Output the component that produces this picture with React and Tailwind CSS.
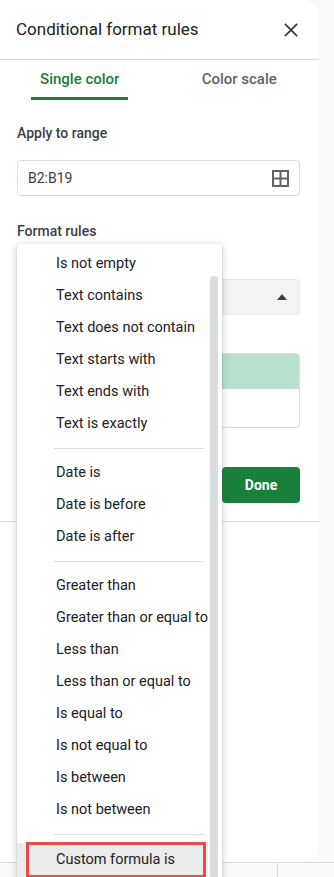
import React from "react";

const groups = [
  ["Is not empty", "Text contains", "Text does not contain", "Text starts with", "Text ends with", "Text is exactly"],
  ["Date is", "Date is before", "Date is after"],
  [
    "Greater than",
    "Greater than or equal to",
    "Less than",
    "Less than or equal to",
    "Is equal to",
    "Is not equal to",
    "Is between",
    "Is not between",
  ],
];

const GridIcon = () => (
  <svg width="17" height="17" viewBox="0 0 17 17" fill="none" stroke="#5f6368" strokeWidth="2">
    <rect x="1" y="1" width="15" height="15" />
    <line x1="8.5" y1="1" x2="8.5" y2="16" />
    <line x1="1" y1="8.5" x2="16" y2="8.5" />
  </svg>
);

const CloseIcon = () => (
  <svg width="14" height="14" viewBox="0 0 14 14" stroke="#3c4043" strokeWidth="1.8" strokeLinecap="square">
    <line x1="1.5" y1="1.5" x2="12.5" y2="12.5" />
    <line x1="12.5" y1="1.5" x2="1.5" y2="12.5" />
  </svg>
);

const RuleMenu = () => (
  <div className="absolute left-[17px] top-[244px] w-[205px] h-[660px] bg-white rounded shadow-[0_2px_6px_2px_rgba(60,64,67,0.15),0_1px_2px_rgba(60,64,67,0.3)] overflow-hidden">
    <div className="absolute left-[193px] top-[32px] w-[8px] h-[640px] bg-[#dadce0] rounded-t-full" />
    <div className="pt-[4px] w-[191px] overflow-hidden">
      {groups.map((items, gi) => (
        <div key={gi}>
          {items.map((item) => (
            <div key={item} className="h-[32px] flex items-center pl-[39px] text-[14.5px] text-[#202124] whitespace-nowrap">
              {item}
            </div>
          ))}
          <div className="py-[8px] pl-[37px] pr-[4px]">
            <div className="h-px bg-[#dadce0]" />
          </div>
        </div>
      ))}
      <div className="relative h-[34px] flex items-center pl-[39px] text-[14.5px] text-[#202124] bg-[#ececec] whitespace-nowrap">
        Custom formula is
        <div className="absolute left-[9px] top-[-1px] w-[180px] h-[36px] border-[3px] border-[#e94b4b]" />
      </div>
    </div>
  </div>
);

export default function App() {
  return (
    <div className="relative w-[334px] h-[877px] overflow-hidden bg-[#f8f9fb] font-['Roboto',sans-serif]">
      <div className="w-[319px] h-[862px] bg-white rounded-tr-2xl rounded-br-2xl">
        <div className="h-[60px] flex items-center justify-between pl-4 pr-[21px] border-b border-[#dadce0]">
          <span className="text-[17px] text-[#202124]">Conditional format rules</span>
          <CloseIcon />
        </div>
        <div className="grid grid-cols-2 h-[40px]">
          <div className="flex justify-center items-end">
            <span className="px-[9px] pb-[8px] border-b-[3px] border-[#188038] text-[15px] font-medium text-[#188038] leading-[20px]">
              Single color
            </span>
          </div>
          <div className="flex justify-center items-end">
            <span className="px-[9px] pb-[8px] border-b-[3px] border-transparent text-[15px] font-medium text-[#5f6368] leading-[20px]">
              Color scale
            </span>
          </div>
        </div>
        <div className="pl-[17px] pr-[19px]">
          <div className="mt-[23px] h-[20px] text-[14px] font-medium text-[#3c4043] leading-[20px]">Apply to range</div>
          <div className="mt-[17px] h-[36px] flex items-center justify-between pl-[10px] pr-[10px] border border-[#dadce0] rounded">
            <span className="text-[14px] text-[#3c4043]">B2:B19</span>
            <GridIcon />
          </div>
          <div className="mt-[25px] h-[20px] text-[14px] font-medium text-[#3c4043] leading-[20px]">Format rules</div>
          <div className="mt-[38px] h-[36px] flex items-center justify-end pr-[12px] bg-[#f1f3f4] border border-[#e8eaed] rounded">
            <svg width="10" height="6" viewBox="0 0 10 6">
              <polygon points="0,6 10,6 5,0" fill="#3c4043" />
            </svg>
          </div>
          <div className="mt-[38px] h-[75px] border border-[#dadce0] rounded overflow-hidden">
            <div className="h-[35px] bg-[#b7e1cd]" />
          </div>
          <div className="mt-[39px] flex justify-end">
            <button className="w-[78px] h-[36px] rounded bg-[#188038] text-white text-[14px] font-bold">Done</button>
          </div>
        </div>
        <div className="mt-[18px] border-t border-[#dadce0]" />
      </div>
      <div className="flex h-[15px] border-t border-[#dadce0]">
        <div className="w-[278px] border-r border-[#dadce0]" />
        <div className="flex-1" />
      </div>
      <RuleMenu />
    </div>
  );
}
